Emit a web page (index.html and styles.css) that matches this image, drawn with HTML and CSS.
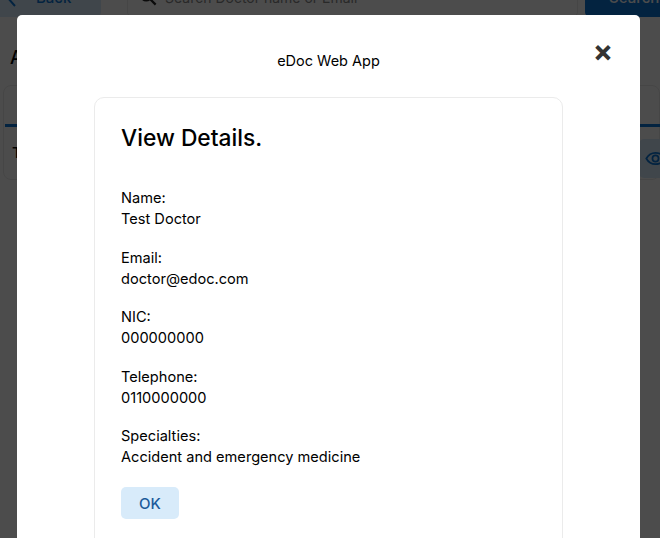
FILE: index.html
```html
<!DOCTYPE html>
<html lang="en">
<head>
<meta charset="utf-8">
<title>eDoc Web App</title>
<link rel="stylesheet" href="styles.css">
</head>
<body>
<div class="page">
  <div class="topbar">
    <a class="back"><svg class="back-icon" viewBox="0 0 12 24" width="12" height="24"><path d="M10 3 2 12l8 9" fill="none" stroke="#0a76d8" stroke-width="2"/></svg>Back</a>
    <div class="search">
      <svg class="search-icon" viewBox="0 0 20 20" width="18" height="18"><circle cx="8" cy="8" r="6" fill="none" stroke="#222" stroke-width="2"/><path d="m12.500 12.500 6 6" stroke="#222" stroke-width="2.500"/></svg>
      <span>Search Doctor name or Email</span>
    </div>
    <a class="search-btn">Search</a>
  </div>
  <h2 class="page-title">All Doctors (1)</h2>
  <div class="table-box">
    <div class="table-head"></div>
    <div class="table-row">
      <span class="row-name">Test Doctor</span>
      <a class="view-btn"><svg viewBox="0 0 24 24" width="21" height="21"><path d="M1.500 12C4 7.500 7.500 5.500 12 5.500S20 7.500 22.500 12C20 16.500 16.500 18.500 12 18.500S4 16.500 1.500 12Z" fill="none" stroke="#0a76d8" stroke-width="2"/><circle cx="12" cy="12" r="3.500" fill="none" stroke="#0a76d8" stroke-width="2"/></svg></a>
    </div>
  </div>
</div>
<div class="overlay">
  <div class="popup">
    <p class="app-name">eDoc Web App</p>
    <a class="close">&times;</a>
    <div class="card">
      <h1 class="card-title">View Details.</h1>
      <div class="field"><div>Name:</div><div>Test Doctor</div></div>
      <div class="field"><div>Email:</div><div>doctor@edoc.com</div></div>
      <div class="field"><div>NIC:</div><div>000000000</div></div>
      <div class="field"><div>Telephone:</div><div>0110000000</div></div>
      <div class="field"><div>Specialties:</div><div>Accident and emergency medicine</div></div>
      <a class="ok">OK</a>
    </div>
  </div>
</div>
</body>
</html>
```
FILE: styles.css
```css
* { box-sizing: border-box; }
html, body { margin: 0; height: 538px; overflow: hidden; }
body { font-family: Inter, "Liberation Sans", sans-serif; background: #fff; color: #000; position: relative; }
.page { margin-top: -23px; }
.topbar { display: flex; align-items: stretch; height: 40px; }
.back { width: 101px; background: #d8ebfa; color: #0a76d8; font-size: 15px; font-weight: 500; display: flex; align-items: center; padding-left: 5px; border-radius: 0 5px 5px 0; }
.back-icon { margin-right: 19px; }
.search { width: 451px; margin-left: 26px; border: 1px solid #ebebeb; display: flex; align-items: center; padding-left: 11px; color: #8a8a8a; font-size: 14px; border-radius: 5px; }
.search-icon { margin-right: 8px; }
.search-btn { margin-left: 7px; flex: 1; background: #0a76d8; color: #fff; border-radius: 5px 0 0 5px; font-size: 15px; font-weight: 500; display: flex; align-items: center; padding-left: 24px; }
.page-title { margin: 30px 0 0 10px; font-size: 18px; line-height: 22px; font-weight: 500; }
.table-box { margin: 16px 0 0 3px; height: 95px; border: 1px solid #ebebeb; border-radius: 8px; }
.table-head { height: 41px; border-bottom: 3px solid #0a76d8; margin: 0 -1px 0 1px; }
.table-row { display: flex; justify-content: space-between; align-items: flex-start; padding: 12px 0 0 8px; font-size: 15px; font-weight: 500; }
.row-name { margin-top: 3px; line-height: 21px; }
.view-btn { width: 60px; height: 39px; margin-right: -40px; background: #d8ebfa; border-radius: 5px; display: flex; align-items: center; padding-left: 6px; }
.overlay { position: absolute; inset: 0; background: rgba(0, 0, 0, 0.7); overflow: hidden; padding: 15px 20px 0 17px; }
.popup { position: relative; height: 600px; background: #fff; border-radius: 5px; padding: 37px 77px 0; }
.app-name { margin: 0; text-align: center; font-size: 14.500px; line-height: 18px; }
.close { position: absolute; top: 17.500px; right: 27px; font-size: 30px; line-height: 36px; font-weight: 700; color: #333; }
.card { margin-top: 27px; height: 480px; border: 1px solid #ebebeb; border-radius: 10px; padding: 25px 26px 0; font-size: 14.600px; line-height: 21px; }
.card-title { margin: 0 0 35.200px; font-size: 22.800px; line-height: 30px; font-weight: 500; }
.field { margin-bottom: 17.500px; }
.ok { display: flex; align-items: center; justify-content: center; width: 58px; height: 32px; margin-top: 19.300px; background: #d8ebfa; color: #1b5a9a; border-radius: 5px; font-size: 15px; font-weight: 500; }
```
